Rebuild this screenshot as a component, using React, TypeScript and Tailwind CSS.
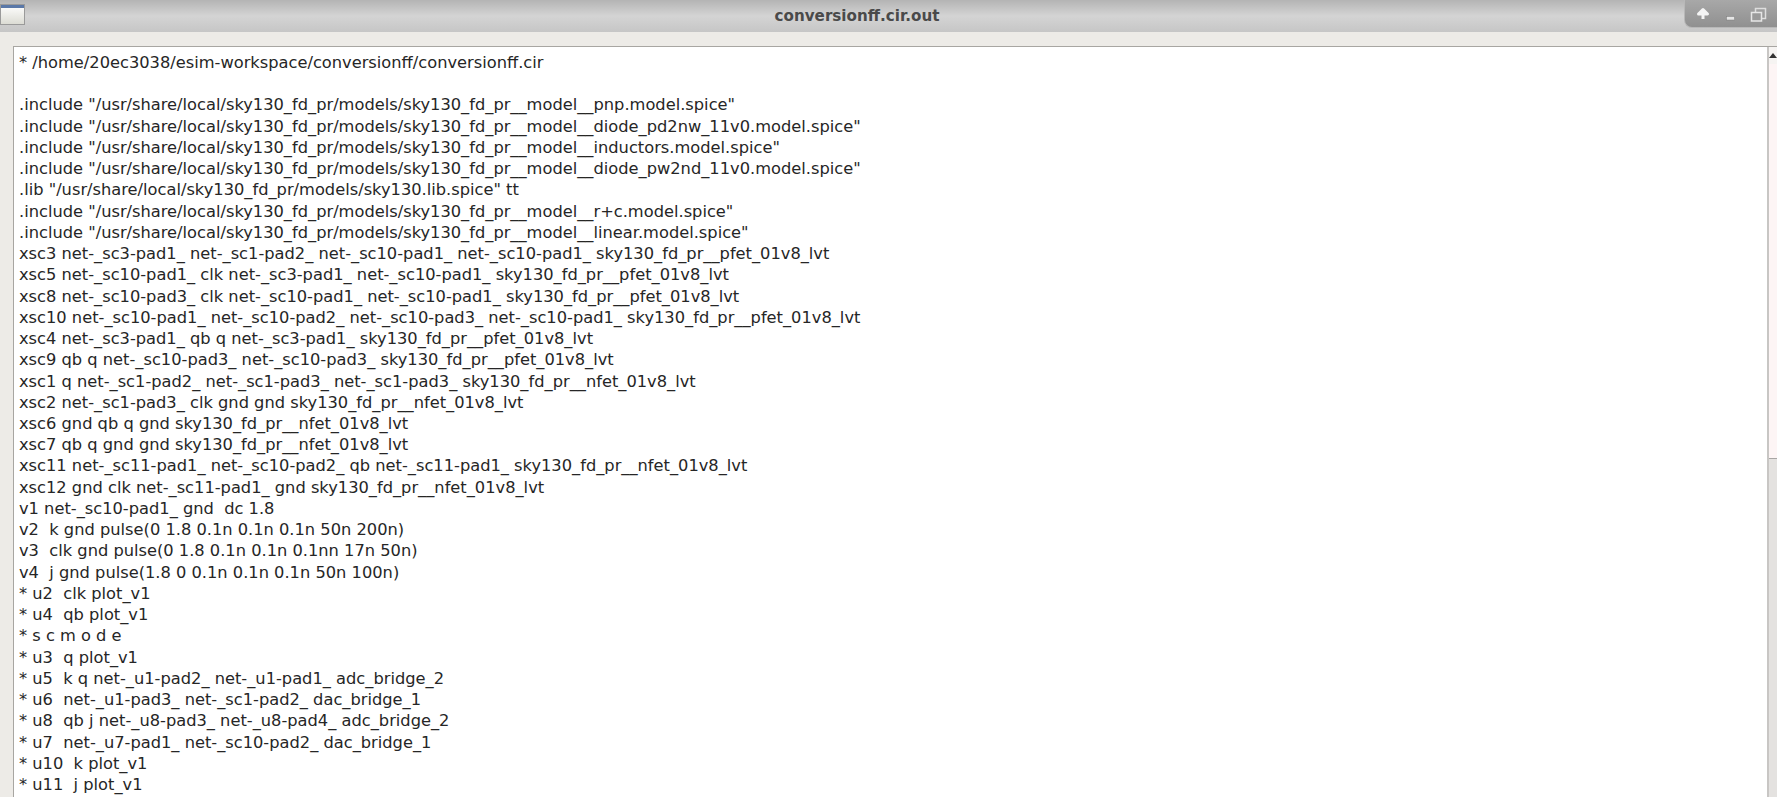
const lines = [
  '* /home/20ec3038/esim-workspace/conversionff/conversionff.cir',
  '',
  '.include "/usr/share/local/sky130_fd_pr/models/sky130_fd_pr__model__pnp.model.spice"',
  '.include "/usr/share/local/sky130_fd_pr/models/sky130_fd_pr__model__diode_pd2nw_11v0.model.spice"',
  '.include "/usr/share/local/sky130_fd_pr/models/sky130_fd_pr__model__inductors.model.spice"',
  '.include "/usr/share/local/sky130_fd_pr/models/sky130_fd_pr__model__diode_pw2nd_11v0.model.spice"',
  '.lib "/usr/share/local/sky130_fd_pr/models/sky130.lib.spice" tt',
  '.include "/usr/share/local/sky130_fd_pr/models/sky130_fd_pr__model__r+c.model.spice"',
  '.include "/usr/share/local/sky130_fd_pr/models/sky130_fd_pr__model__linear.model.spice"',
  'xsc3 net-_sc3-pad1_ net-_sc1-pad2_ net-_sc10-pad1_ net-_sc10-pad1_ sky130_fd_pr__pfet_01v8_lvt',
  'xsc5 net-_sc10-pad1_ clk net-_sc3-pad1_ net-_sc10-pad1_ sky130_fd_pr__pfet_01v8_lvt',
  'xsc8 net-_sc10-pad3_ clk net-_sc10-pad1_ net-_sc10-pad1_ sky130_fd_pr__pfet_01v8_lvt',
  'xsc10 net-_sc10-pad1_ net-_sc10-pad2_ net-_sc10-pad3_ net-_sc10-pad1_ sky130_fd_pr__pfet_01v8_lvt',
  'xsc4 net-_sc3-pad1_ qb q net-_sc3-pad1_ sky130_fd_pr__pfet_01v8_lvt',
  'xsc9 qb q net-_sc10-pad3_ net-_sc10-pad3_ sky130_fd_pr__pfet_01v8_lvt',
  'xsc1 q net-_sc1-pad2_ net-_sc1-pad3_ net-_sc1-pad3_ sky130_fd_pr__nfet_01v8_lvt',
  'xsc2 net-_sc1-pad3_ clk gnd gnd sky130_fd_pr__nfet_01v8_lvt',
  'xsc6 gnd qb q gnd sky130_fd_pr__nfet_01v8_lvt',
  'xsc7 qb q gnd gnd sky130_fd_pr__nfet_01v8_lvt',
  'xsc11 net-_sc11-pad1_ net-_sc10-pad2_ qb net-_sc11-pad1_ sky130_fd_pr__nfet_01v8_lvt',
  'xsc12 gnd clk net-_sc11-pad1_ gnd sky130_fd_pr__nfet_01v8_lvt',
  'v1 net-_sc10-pad1_ gnd  dc 1.8',
  'v2  k gnd pulse(0 1.8 0.1n 0.1n 0.1n 50n 200n)',
  'v3  clk gnd pulse(0 1.8 0.1n 0.1n 0.1nn 17n 50n)',
  'v4  j gnd pulse(1.8 0 0.1n 0.1n 0.1n 50n 100n)',
  '* u2  clk plot_v1',
  '* u4  qb plot_v1',
  '* s c m o d e',
  '* u3  q plot_v1',
  '* u5  k q net-_u1-pad2_ net-_u1-pad1_ adc_bridge_2',
  '* u6  net-_u1-pad3_ net-_sc1-pad2_ dac_bridge_1',
  '* u8  qb j net-_u8-pad3_ net-_u8-pad4_ adc_bridge_2',
  '* u7  net-_u7-pad1_ net-_sc10-pad2_ dac_bridge_1',
  '* u10  k plot_v1',
  '* u11  j plot_v1',
];

export default function App() {
  return (
    <div className="w-[1777px] h-[797px] overflow-hidden flex flex-col bg-[#edebe7] font-['DejaVu_Sans',sans-serif]">
      <header className="relative h-8 shrink-0 flex items-center justify-center pr-[63px] bg-gradient-to-b from-[#b4b4b4] via-[#d4d4d4] to-[#c6c6c6]">
        <span className="text-[15.15px] font-bold text-[#4a4a4a]">conversionff.cir.out</span>
        <div className="absolute left-0 top-1 w-[25px] h-[21px] border border-[#9a9a9a] bg-gradient-to-b from-white to-[#dcdcd4]">
          <div className="h-[3px] bg-[#5a78a8]" />
        </div>
        <div className="absolute right-0 top-0 w-[93px] h-7 rounded-bl-lg bg-gradient-to-b from-[#a8a8a8] to-[#909090] border-b border-l border-[#b8b8b8]">
          <svg width="92" height="28" viewBox="0 0 92 28" className="block">
            <path d="M18 14.5 L18 19 M13.5 14 L18 9.5 L22.5 14 Z" stroke="#f4f4f4" strokeWidth="3" fill="#f4f4f4" strokeLinejoin="round" />
            <rect x="41.5" y="16.5" width="8" height="3.5" fill="#e6e6e6" stroke="#7c7c7c" strokeWidth="0.5" />
            <rect x="70.5" y="8.5" width="10" height="10" fill="none" stroke="#dedede" strokeWidth="1.5" />
            <rect x="66.5" y="12.5" width="10" height="8.5" fill="#9a9a9a" stroke="#e6e6e6" strokeWidth="1.5" />
          </svg>
        </div>
      </header>
      <main className="flex-1 min-h-0 flex pt-[14px] pl-[13px]">
        <div className="flex-1 min-w-0 flex border-t border-l border-[#a8a6a2] bg-white">
          <div className="flex-1 min-w-0 overflow-hidden pt-[5px] pl-[5px] text-[16.25px] leading-[21.24px] text-[#262626] whitespace-pre">
            {lines.map((line, i) => (
              <div key={i} className="h-[21.24px]">{line}</div>
            ))}
          </div>
          <div className="w-[10px] shrink-0 flex flex-col border-l-2 border-[#c8c6c4] bg-[#fdf5f5]">
            <div className="h-[17px] flex items-start justify-start pt-[6px] bg-[#f6f4f2]">
              <svg width="8" height="5" viewBox="0 0 8 5"><path d="M0 5 L4 0 L8 5 Z" fill="#333333" /></svg>
            </div>
            <div className="h-[394px] shrink-0 bg-[#fdf5f5]" />
            <div className="flex-1 bg-[#e4e2e0] border-t border-[#a8a6a4]" />
          </div>
        </div>
      </main>
    </div>
  );
}
